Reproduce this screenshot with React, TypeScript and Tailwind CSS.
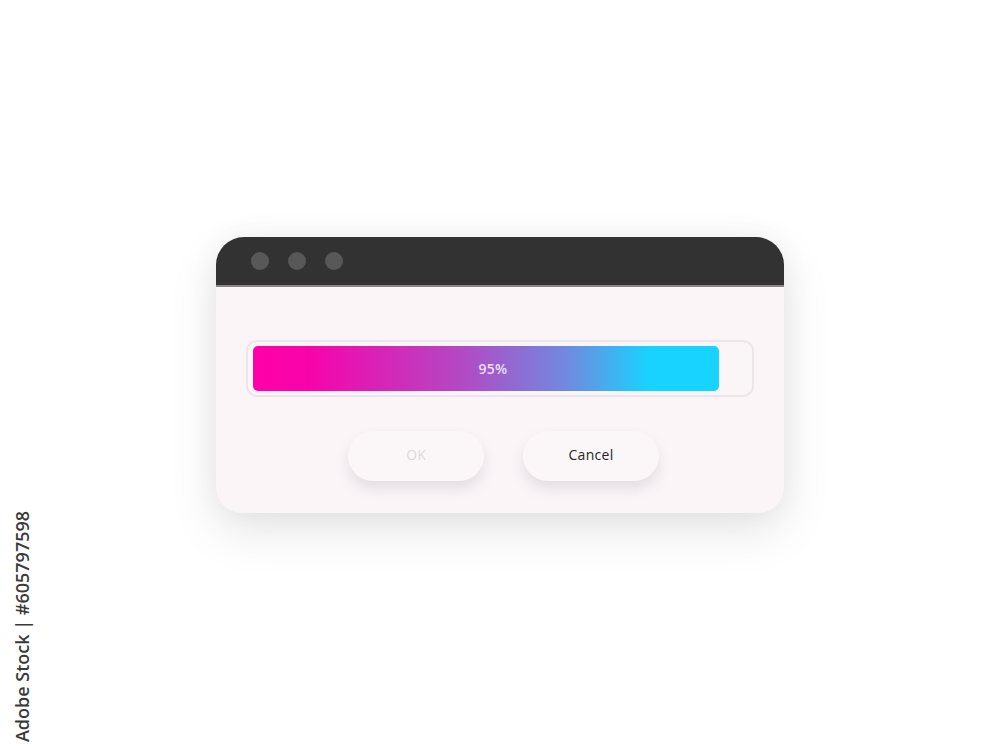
const progress = 95;

function WindowDots() {
  return (
    <div className="flex items-center gap-[19px] pl-[35px]">
      <span className="block w-[18px] h-[18px] rounded-full bg-[#585858]" />
      <span className="block w-[18px] h-[18px] rounded-full bg-[#585858]" />
      <span className="block w-[18px] h-[18px] rounded-full bg-[#585858]" />
    </div>
  );
}

function ProgressBar({ value }: { value: number }) {
  return (
    <div className="h-[57px] rounded-[11px] border-2 border-[#ebe6e9] bg-[#faf6f8] px-[5px] py-[4px]">
      <div
        className="h-full rounded-[5px] flex items-center justify-center pl-[14px] bg-[linear-gradient(90deg,#ff00a8_0%,#f803aa_12%,#b24ac4_45%,#6d8ce0_68%,#18d3ff_85%,#18d3ff_100%)]"
        style={{ width: `${(465 / 493) * 100 * (value / 95)}%` }}
      >
        <span className="text-[14px] font-semibold text-[#eadff7] tracking-wide">{value}%</span>
      </div>
    </div>
  );
}

export default function App() {
  return (
    <div
      className="relative w-full h-[750px] bg-white flex items-center justify-center"
      style={{ fontFamily: '"Open Sans", "Noto Sans", sans-serif' }}
    >
      {/* window */}
      <div className="w-[568px] h-[276px] rounded-t-[28px] rounded-b-[26px] bg-[#fbf5f8] shadow-[0_18px_50px_rgba(0,0,0,0.10),0_0_30px_rgba(0,0,0,0.05)] flex flex-col overflow-hidden">
        <div className="h-[50px] bg-[#323232] border-b-2 border-[#8a8688] flex items-center shrink-0">
          <WindowDots />
        </div>
        <div className="flex-1 flex flex-col px-[30px] pt-[53px]">
          <ProgressBar value={progress} />
          <div className="flex justify-center gap-[39px] mt-[34px] pl-[7px]">
            <button className="w-[136px] h-[50px] rounded-full bg-[#fbf7f9] shadow-[0_8px_14px_rgba(120,100,115,0.16)] text-[14px] leading-none pb-[2px] text-[#dcd7da]">
              OK
            </button>
            <button className="w-[136px] h-[50px] rounded-full bg-[#fbf7f9] shadow-[0_8px_14px_rgba(120,100,115,0.16)] text-[14px] leading-none pb-[2px] font-medium tracking-[0.3px] text-[#262626]">
              Cancel
            </button>
          </div>
        </div>
      </div>

      {/* stock id */}
      <div className="absolute left-[11px] top-[511px] h-[230px] w-[24px] flex items-center justify-center">
        <span className="-rotate-90 whitespace-nowrap text-[18px] text-[#3a3a3a] font-semibold">
          Adobe Stock | #605797598
        </span>
      </div>
    </div>
  );
}
